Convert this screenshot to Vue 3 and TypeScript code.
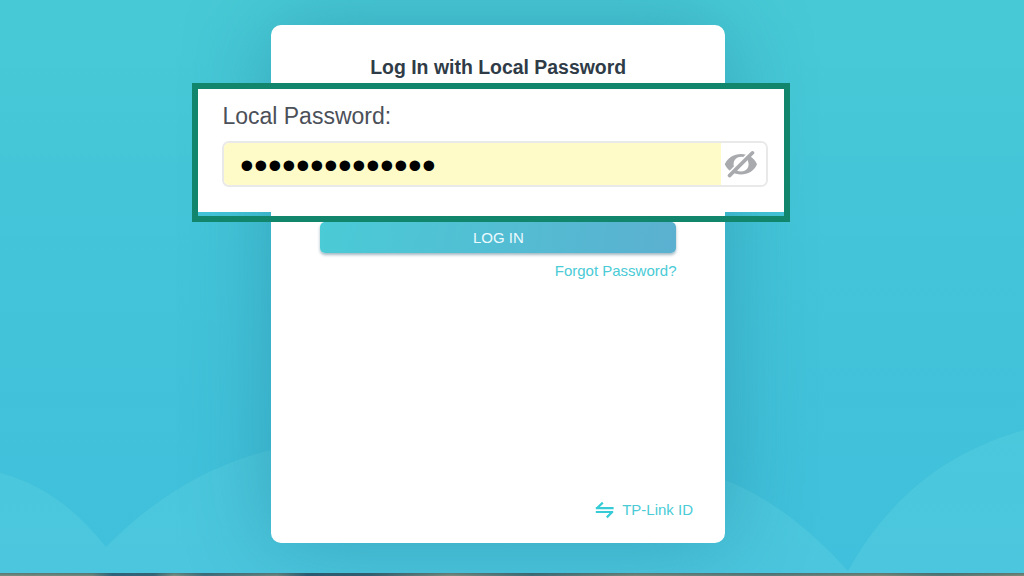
<template>
    <main class="page">
        <svg class="hills" viewBox="0 0 1024 576" preserveAspectRatio="none">
            <path d="M0 473 C42 484 76 509 106 547 C151 501 207 465 271 450 L480 420 L725 480 C775 500 815 534 848 571 C885 504 940 454 1024 430 V576 H0 Z" />
        </svg>

        <section class="card">
            <h1>Log In with Local Password</h1>
            <form class="login" @submit.prevent="handleLogin()">
                <button class="submit" type="submit">LOG IN</button>
                <a class="forgot">Forgot Password?</a>
            </form>
            <a class="switch">
                <svg width="20" height="18" viewBox="0 0 20 18">
                    <path d="M0.8 7.2 H18.6 M2.2 7 L7.8 1.6 M0.8 11 H18.2 M17.2 11 L11.8 16.4" />
                </svg>
                <span>TP-Link ID</span>
            </a>
        </section>

        <section class="callout">
            <div class="panel">
                <label for="password">Local Password:</label>
                <div class="field">
                    <input id="password" :type="visible ? 'text' : 'password'" v-model="password">
                    <button type="button" class="eye" @click="visible = !visible">
                        <svg width="34" height="28" viewBox="0 0 34 28">
                            <path class="shape" fill-rule="evenodd" d="M0.8 14.2 C4 7.5 10 4 17 4 C24 4 30 7.5 33 14.2 C30 21 24 24.4 17 24.4 C10 24.4 4 21 0.8 14.2 Z M17.5 6.8 C12.5 6.8 9.6 10 9.6 14.2 C9.6 18.5 12.5 21.4 17 21.4 C21.5 21.4 24.6 18.5 24.6 14.2 C24.6 10 22 6.8 17.5 6.8 Z" />
                            <path class="gap" d="M4 25.2 L27.5 1.7" />
                            <path class="slash" d="M5.5 25.6 L28.5 2.8" />
                        </svg>
                    </button>
                </div>
            </div>
        </section>

        <div class="strip"></div>
    </main>
</template>

<script lang="ts" setup>
import { Ref, ref } from 'vue'

let password: Ref<string> = ref('localpassword1')

let visible: Ref<boolean> = ref(false)

const handleLogin = () => {
    visible.value = false
}
</script>

<style>
body {
    margin: 0;
    overflow: hidden;
}
</style>

<style scoped>
.page {
    position: relative;
    box-sizing: border-box;
    width: 1024px;
    height: 576px;
    padding: 25px 0 0 271.4px;
    overflow: hidden;
    background: linear-gradient(#48cad6 0%, #43c4d9 45%, #40c0dc 100%);
    font-family: "Liberation Sans", Arial, sans-serif;
}

.hills {
    position: absolute;
    inset: 0;
    width: 1024px;
    height: 576px;
    fill: rgba(97, 212, 226, 0.34);
}

.card {
    position: relative;
    display: flex;
    flex-direction: column;
    box-sizing: border-box;
    width: 453.6px;
    height: 518px;
    padding: 30px 32px 22.5px 49px;
    background: #fff;
    border-radius: 10px;
    box-shadow: 0 0 85px rgba(32, 120, 145, 0.43);
}

h1 {
    margin: 0 17px 0 0;
    color: #2f3c47;
    font-size: 19.45px;
    line-height: 24px;
    text-align: center;
}

.login {
    display: flex;
    flex-direction: column;
    margin: 143px 16.5px 0 0;
}

.submit {
    height: 31px;
    padding: 0;
    border: none;
    border-radius: 5px;
    background: linear-gradient(100deg, #4acbd6, #5bb0d0);
    box-shadow: 0 2px 3px rgba(50, 100, 125, 0.45);
    color: #ecfaff;
    font-family: inherit;
    font-size: 15px;
    line-height: 31px;
}

.forgot {
    margin-top: 9px;
    align-self: flex-end;
    color: #4acbd6;
    font-size: 15px;
    line-height: 18px;
}

.switch {
    display: flex;
    align-items: center;
    align-self: flex-end;
    gap: 7px;
    margin-top: auto;
    color: #4acbd6;
    font-size: 15px;
    line-height: 22px;
}

.switch path {
    fill: none;
    stroke: #36cbd6;
    stroke-width: 2.2;
}

.callout {
    position: absolute;
    left: 192.4px;
    top: 83px;
    box-sizing: border-box;
    width: 598px;
    height: 139px;
    border: 6px solid #11866c;
}

.panel {
    box-sizing: border-box;
    height: 123px;
    padding: 14px 16px 0 24px;
    background: #fff;
}

label {
    display: block;
    height: 26px;
    color: #4b5059;
    font-size: 23px;
    line-height: 26px;
}

.field {
    display: flex;
    box-sizing: border-box;
    height: 46px;
    margin-top: 11.5px;
    overflow: hidden;
    border: 2px solid #e9e9e9;
    border-radius: 7px;
}

input {
    flex: 1;
    box-sizing: border-box;
    min-width: 0;
    padding: 4px 0 0 15.5px;
    border: none;
    outline: none;
    background: #fefbc8;
    color: #000;
    font-family: inherit;
    font-size: 39px;
    letter-spacing: 0.35px;
}

.eye {
    display: flex;
    align-items: center;
    width: 45px;
    padding: 0 0 0 3px;
    border: none;
    background: #fff;
}

.shape {
    fill: #a8aaad;
}

.gap {
    stroke: #fff;
    stroke-width: 4;
}

.slash {
    stroke: #a8aaad;
    stroke-width: 3.6;
    stroke-linecap: round;
}

.strip {
    position: absolute;
    left: 0;
    right: 0;
    bottom: 0;
    height: 3.5px;
    background: linear-gradient(rgba(50, 90, 100, 0.45), transparent), linear-gradient(90deg, #7a8f80 0%, #718a7f 9%, #2d6580 11%, #35677a 15%, #7c9386 17%, #3f7080 20%, #6d8983 27%, #285b74 30%, #305f72 36%, #7e8f81 44%, #406f79 52%, #7a8c7e 62%, #5d7f7d 75%, #7f8b7a 86%, #547a78 92%, #808c7a 100%);
}
</style>
